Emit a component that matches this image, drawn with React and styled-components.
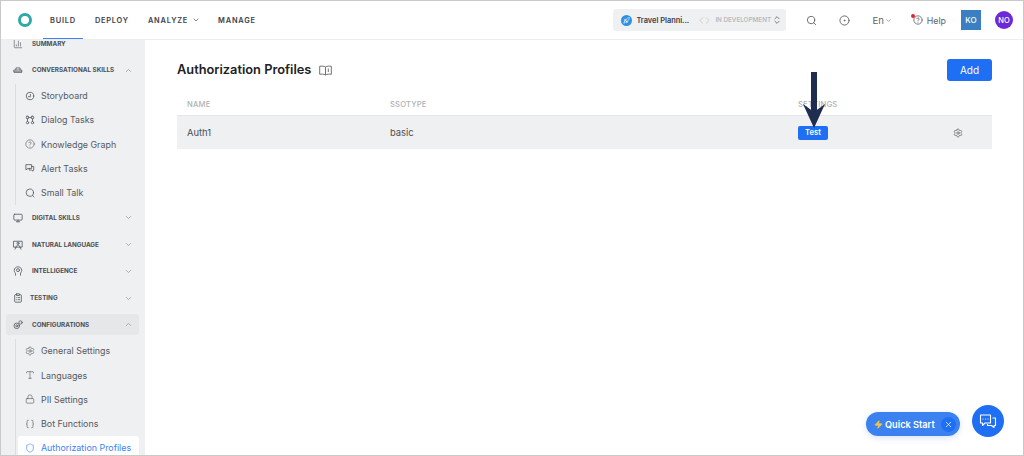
import React from 'react';
import styled, { createGlobalStyle } from 'styled-components';
import {
  BarChart3, ChevronUp, ChevronDown, ChevronsUpDown, CircleHelp,
  Monitor, ClipboardList, Settings, Type, Lock, Braces, Shield,
  Search, CircleDot, Code, Zap, X, Rocket,
} from 'lucide-react';

const GlobalStyle = createGlobalStyle`
  html, body { margin: 0; padding: 0; background: #fff; }
  body { font-family: Inter, "Liberation Sans", sans-serif; color: #202124; overflow: hidden; }
  * { box-sizing: border-box; }
`;

const Page = styled.div`
  position: relative;
  width: 1024px;
  height: 456px;
  border: 1px solid #c9c9c9;
  display: flex;
  flex-direction: column;
  overflow: hidden;
`;

const Header = styled.header`
  height: 39px;
  flex: none;
  display: flex;
  align-items: center;
  padding: 0 10px 0 17px;
  border-bottom: 1.5px solid #eceded;
  background: #fff;
  position: relative;
  z-index: 2;
`;

const Logo = styled.div`
  width: 14px;
  height: 14px;
  border-radius: 50%;
  border: 3.5px solid #2fa8a8;
  flex: none;
  margin-right: 11px;
`;

const Nav = styled.nav`
  display: flex;
  height: 100%;
  align-items: center;
`;

const NavItem = styled.div`
  height: 100%;
  display: flex;
  align-items: center;
  gap: 4px;
  padding: 0 ${p => p.$pad ?? 7}px;
  margin-right: ${p => p.$gap ?? 0}px;
  font-size: 7.4px;
  font-weight: 600;
  letter-spacing: 0.8px;
  color: #3d4148;
  box-shadow: ${p => (p.$active ? 'inset 0 -1px 0 #3b82f6' : 'none')};
`;

const Spacer = styled.div`
  flex: 1;
`;

const BotSelect = styled.div`
  width: 173px;
  height: 22px;
  border-radius: 3px;
  background: #eff0f1;
  display: flex;
  align-items: center;
  padding: 0 4px 0 8px;
  color: #b4b6ba;
`;

const BotBadge = styled.div`
  width: 11px;
  height: 11px;
  border-radius: 50%;
  background: #2f8fe0;
  color: #fff;
  display: flex;
  align-items: center;
  justify-content: center;
  margin-right: 4px;
  flex: none;
`;

const BotName = styled.span`
  font-size: 7.4px;
  font-weight: 600;
  color: #3d4148;
  width: 63px;
  white-space: nowrap;
`;

const DevStatus = styled.span`
  font-size: 6.3px;
  font-weight: 600;
  color: #b9bbbf;
  margin-left: 5px;
  white-space: nowrap;
`;

const HeaderTools = styled.div`
  display: flex;
  align-items: center;
  color: #5f6368;
  margin-left: 20px;
`;

const ToolText = styled.span`
  font-size: ${p => p.$size ?? 9.6}px;
  color: #5f6368;
  display: flex;
  align-items: center;
  gap: 1px;
`;

const HelpIcon = styled.span`
  position: relative;
  display: flex;
  margin-right: 4px;
  &::before {
    content: '';
    position: absolute;
    top: -1px;
    left: -2px;
    width: 4px;
    height: 4px;
    border-radius: 50%;
    background: #e0232e;
  }
`;

const SquareAvatar = styled.div`
  width: 20px;
  height: 20px;
  background: #3a7fc1;
  color: #fff;
  font-size: 8px;
  font-weight: 500;
  display: flex;
  align-items: center;
  justify-content: center;
  margin: 0 14px 0 15px;
`;

const RoundAvatar = styled.div`
  width: 18px;
  height: 18px;
  border-radius: 50%;
  background: #6d28d9;
  color: #fff;
  font-size: 7.5px;
  font-weight: 500;
  display: flex;
  align-items: center;
  justify-content: center;
`;

const Body = styled.div`
  flex: 1;
  display: flex;
  min-height: 0;
`;

const Sidebar = styled.aside`
  width: 144px;
  flex: none;
  background: #eff0f1;
  overflow: hidden;
  padding: 0 6px 0 5px;
`;

const SectionRow = styled.div`
  height: ${p => p.$h ?? 26.7}px;
  margin-top: ${p => p.$mt ?? 0}px;
  display: flex;
  align-items: center;
  padding: 0 6px 0 7px;
  border-radius: 3px;
  background: ${p => (p.$open ? '#e6e7e9' : 'transparent')};
  color: #565a62;
`;

const SectionLabel = styled.span`
  flex: 1;
  font-size: 6.3px;
  font-weight: 700;
  color: #4a4e55;
  margin-left: ${p => p.$ml ?? 9}px;
  white-space: nowrap;
`;

const SubList = styled.div`
  margin-left: 9px;
  margin-top: ${p => p.$mt ?? 0}px;
  border-left: 1.5px solid #dcdde0;
  padding-left: 2px;
`;

const SubItem = styled.div`
  height: 24.2px;
  display: flex;
  align-items: center;
  gap: 6px;
  padding-left: 7px;
  font-size: 8.9px;
  border-radius: 3px 3px 0 0;
  white-space: nowrap;
  color: ${p => (p.$active ? '#3b82f6' : '#565a62')};
  background: ${p => (p.$active ? '#fff' : 'transparent')};
`;

const Main = styled.main`
  flex: 1;
  padding: 19px 31px 0 32px;
  background: #fff;
`;

const TitleRow = styled.div`
  height: 22px;
  display: flex;
  align-items: center;
`;

const Title = styled.h1`
  margin: 0 8px 1px 0;
  font-size: 12.8px;
  font-weight: 600;
  color: #202124;
`;

const AddButton = styled.button`
  margin-left: auto;
  width: 45px;
  height: 22px;
  border: 0;
  border-radius: 3px;
  background: #1f6ff5;
  color: #fff;
  font: 400 10px Inter, sans-serif;
`;

const TableGrid = styled.div`
  display: grid;
  grid-template-columns: 203px 408px 1fr 39px;
  padding-left: 10px;
  align-items: center;
`;

const TableHead = styled(TableGrid)`
  margin-top: 12px;
  height: 22px;
  font-size: 7.6px;
  font-weight: 500;
  letter-spacing: 0.2px;
  color: #aeb0b4;
`;

const TableRow = styled(TableGrid)`
  height: 34px;
  background: #eff0f1;
  border-top: 1.5px solid #e4e5e7;
  font-size: 9.4px;
  color: #4a4e55;
`;

const TestButton = styled.button`
  display: block;
  width: 30px;
  height: 14px;
  padding: 0;
  border: 0;
  border-radius: 2px;
  background: #1f6ff5;
  color: #fff;
  font: 600 7.6px Inter, sans-serif;
`;

const GearCell = styled.div`
  color: #4a4e55;
  display: flex;
`;

const Arrow = styled.svg`
  position: absolute;
  left: 802px;
  top: 71px;
`;

const QuickStart = styled.div`
  position: absolute;
  left: 865px;
  top: 411px;
  width: 94px;
  height: 24px;
  border-radius: 12px;
  background: #3b82f0;
  color: #fff;
  display: flex;
  align-items: center;
  padding: 0 4px 0 8px;
  font-size: 9.2px;
  font-weight: 600;
  box-shadow: 0 2px 6px rgba(60, 110, 220, 0.2);
`;

const BoltSlot = styled.span`
  display: flex;
  width: 10px;
  margin-right: 1px;
`;

const QuickClose = styled.div`
  margin-left: auto;
  width: 15px;
  height: 15px;
  border-radius: 50%;
  background: #1f6ff5;
  display: flex;
  align-items: center;
  justify-content: center;
`;

const ChatButton = styled.div`
  position: absolute;
  left: 971px;
  top: 404px;
  width: 32px;
  height: 32px;
  border-radius: 50%;
  background: #1f6ff5;
  color: #fff;
  display: flex;
  align-items: center;
  justify-content: center;
`;

const ToolSlot = styled.span`
  display: flex;
  margin-right: ${p => p.$gap}px;
`;

// small outline icons that the icon packages have no close match for
const Glyph = ({ size = 10, children }) => (
  <svg width={size} height={size} viewBox="0 0 12 12" fill="none" stroke="currentColor" strokeWidth="1" strokeLinecap="round" strokeLinejoin="round">
    {children}
  </svg>
);

const SkillsIcon = props => (
  <Glyph {...props}><path d="M3.5 6V3.5h5V6M1.5 6h9v2.5h-9zM1.5 8.5h9" /></Glyph>
);
const LanguageIcon = props => (
  <Glyph {...props}><path d="M1 1.5h10v7H1zM2.5 11l1-2.5M9.5 11l-1-2.5" /><circle cx="6" cy="4" r="1.3" /><path d="M3.8 8.5c.2-1.6 1-2.3 2.2-2.3s2 .7 2.2 2.3" /></Glyph>
);
const BrainIcon = props => (
  <Glyph {...props}><path d="M3 11V8.5C1.8 7.6 1.5 6.3 1.5 5.2 1.5 2.8 3.5 1 6 1s4.5 1.8 4.5 4.2c0 1.1-.5 2.3-1.5 3.3V11" /><circle cx="6" cy="5" r="1.8" /></Glyph>
);
const GearsIcon = props => (
  <Glyph {...props}><circle cx="4.5" cy="7" r="3.3" /><circle cx="4.5" cy="7" r="1.2" /><circle cx="9" cy="3" r="2" /></Glyph>
);
const StoryIcon = props => (
  <Glyph {...props}><circle cx="6" cy="6" r="4.5" /><path d="M4.2 6.8h2.3V4.2" /></Glyph>
);
const DialogIcon = props => (
  <Glyph {...props}><rect x="1.5" y="1.5" width="3" height="3" rx="1" /><rect x="7.5" y="1.5" width="3" height="3" rx="1" /><circle cx="3" cy="9.2" r="1.4" /><circle cx="9" cy="9.2" r="1.4" /><path d="M3 4.5v3.3M9 4.5v3.3M4.5 3h3" /></Glyph>
);
const AlertIcon = props => (
  <Glyph {...props}><path d="M1.5 2h6.5v4.5H3.5L1.5 8zM8 4.2h2.5V8.5H9.5v1.3L8 8.5H5V6.5" /></Glyph>
);
const TalkIcon = props => (
  <Glyph {...props}><circle cx="5.8" cy="5.6" r="4.4" /><path d="M8.8 8.8L10.8 10.8" /></Glyph>
);
const BookIcon = () => (
  <svg width="13" height="11" viewBox="0 0 13 11" fill="none" stroke="#5f6368" strokeWidth="0.9">
    <path d="M6.5 2C5 1 2.5 1 .7 1.3v8C2.5 9 5 9 6.5 10c1.5-1 4-1 5.8-.7v-8C10.5 1 8 1 6.5 2zM6.5 2v8" />
    <path d="M9.3 3.5v3.5" />
  </svg>
);

const ChatIcon = () => (
  <svg width="18" height="17" viewBox="0 0 18 17" fill="none" stroke="currentColor" strokeWidth="1.1" strokeLinejoin="round">
    <path d="M1.5 2 H11.5 V10 H6 L3.5 12.5 V10 H1.5 Z" />
    <path d="M13.5 5 H16.5 V12.5 H15 V14.5 L12.5 12.5 H8.5 V11" />
    <circle cx="4" cy="6" r="0.6" fill="currentColor" stroke="none" />
    <circle cx="6.5" cy="6" r="0.6" fill="currentColor" stroke="none" />
    <circle cx="9" cy="6" r="0.6" fill="currentColor" stroke="none" />
  </svg>
);

const topSections = [
  { label: 'DIGITAL SKILLS', icon: Monitor },
  { label: 'NATURAL LANGUAGE', icon: LanguageIcon },
  { label: 'INTELLIGENCE', icon: BrainIcon },
  { label: 'TESTING', icon: ClipboardList, ml: 7 },
];

const skillItems = [
  { label: 'Storyboard', icon: StoryIcon },
  { label: 'Dialog Tasks', icon: DialogIcon },
  { label: 'Knowledge Graph', icon: CircleHelp },
  { label: 'Alert Tasks', icon: AlertIcon },
  { label: 'Small Talk', icon: TalkIcon },
];

const configItems = [
  { label: 'General Settings', icon: Settings },
  { label: 'Languages', icon: Type },
  { label: 'PII Settings', icon: Lock },
  { label: 'Bot Functions', icon: Braces },
  { label: 'Authorization Profiles', icon: Shield, active: true },
];

const SubItems = ({ items, mt }) => (
  <SubList $mt={mt}>
    {items.map(({ label, icon: Icon, active }) => (
      <SubItem key={label} $active={active}>
        <Icon size={10} strokeWidth={1.5} />
        {label}
      </SubItem>
    ))}
  </SubList>
);

const App = () => (
  <Page>
    <GlobalStyle />
    <Header>
      <Logo />
      <Nav>
        <NavItem $active $pad={7} $gap={12}>BUILD</NavItem>
        <NavItem $pad={0} $gap={19}>DEPLOY</NavItem>
        <NavItem $pad={0} $gap={18}>ANALYZE <ChevronDown size={8} /></NavItem>
        <NavItem $pad={0}>MANAGE</NavItem>
      </Nav>
      <Spacer />
      <BotSelect>
        <BotBadge><Rocket size={7} /></BotBadge>
        <BotName>Travel Planni...</BotName>
        <Code size={11} strokeWidth={1.2} />
        <DevStatus>IN DEVELOPMENT</DevStatus>
        <ChevronsUpDown size={10} color="#5f6368" style={{ marginLeft: 'auto' }} />
      </BotSelect>
      <HeaderTools>
        <ToolSlot $gap={22}><Search size={11} /></ToolSlot>
        <ToolSlot $gap={22}><CircleDot size={11} /></ToolSlot>
        <ToolSlot $gap={21}><ToolText>En <ChevronDown size={7} /></ToolText></ToolSlot>
        <HelpIcon><CircleHelp size={10} /></HelpIcon>
        <ToolText $size={8.8}>Help</ToolText>
        <SquareAvatar>KO</SquareAvatar>
        <RoundAvatar>NO</RoundAvatar>
      </HeaderTools>
    </Header>
    <Body>
      <Sidebar>
        <SectionRow $h={8}><BarChart3 size={10} strokeWidth={1.5} /><SectionLabel>SUMMARY</SectionLabel></SectionRow>
        <SectionRow $mt={9}><SkillsIcon /><SectionLabel>CONVERSATIONAL SKILLS</SectionLabel><ChevronUp size={9} color="#9a9ca1" /></SectionRow>
        <SubItems items={skillItems} />
        {topSections.map(({ label, icon: Icon, ml }) => (
          <SectionRow key={label}>
            <Icon size={10} />
            <SectionLabel $ml={ml}>{label}</SectionLabel>
            <ChevronDown size={9} color="#9a9ca1" />
          </SectionRow>
        ))}
        <SectionRow $open $h={21} $mt={3}><GearsIcon /><SectionLabel>CONFIGURATIONS</SectionLabel><ChevronUp size={9} color="#9a9ca1" /></SectionRow>
        <SubItems items={configItems} mt={3.5} />
      </Sidebar>
      <Main>
        <TitleRow>
          <Title>Authorization Profiles</Title>
          <BookIcon />
          <AddButton>Add</AddButton>
        </TitleRow>
        <TableHead>
          <span>NAME</span>
          <span>SSOTYPE</span>
          <span>SETTINGS</span>
        </TableHead>
        <TableRow>
          <span>Auth1</span>
          <span>basic</span>
          <div><TestButton>Test</TestButton></div>
          <GearCell><Settings size={10} strokeWidth={1.5} /></GearCell>
        </TableRow>
      </Main>
    </Body>
    <Arrow width="22" height="56" viewBox="0 0 22 56">
      <rect x="8" y="0" width="6" height="40" fill="#1e2d50" />
      <path d="M0 32 L11 56 L22 32 L11 40 Z" fill="#1e2d50" />
    </Arrow>
    <QuickStart>
      <BoltSlot><Zap size={9} color="#f5c542" fill="#f5c542" /></BoltSlot>
      Quick Start
      <QuickClose><X size={9} /></QuickClose>
    </QuickStart>
    <ChatButton><ChatIcon /></ChatButton>
  </Page>
);

export default App;
